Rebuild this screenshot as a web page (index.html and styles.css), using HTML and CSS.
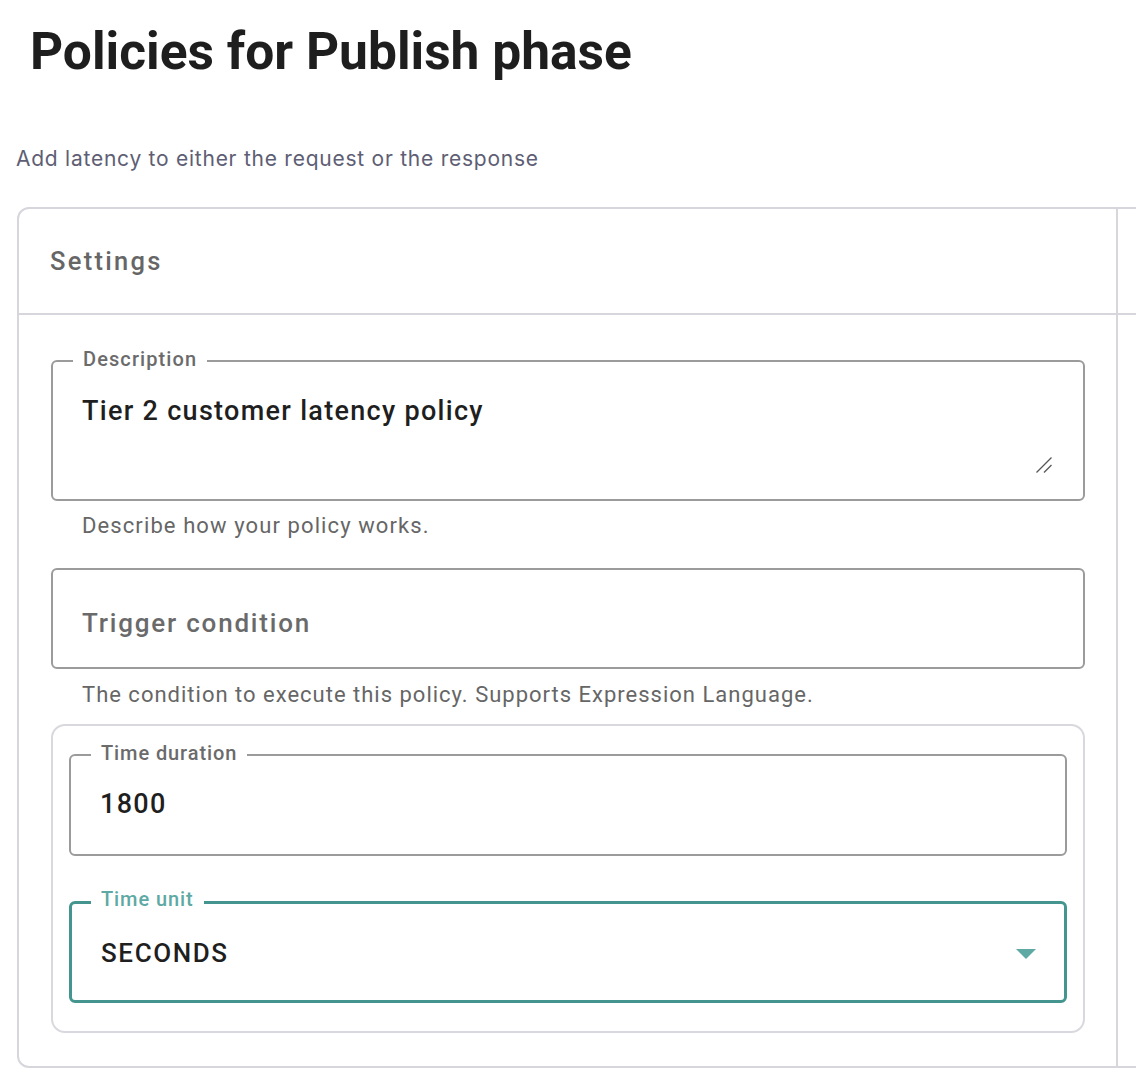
FILE: index.html
```html
<!DOCTYPE html>
<html lang="en">
<head>
<meta charset="utf-8">
<title>Policies for Publish phase</title>
<link rel="stylesheet" href="styles.css">
</head>
<body>
<div class="page">
  <h1 class="title">Policies for Publish phase</h1>
  <p class="subtitle">Add latency to either the request or the response</p>
  <div class="card">
    <div class="main">
      <div class="card-header"><span class="card-title">Settings</span></div>
      <div class="card-body">
        <div class="field field-desc">
          <span class="field-label">Description</span>
          <div class="field-value">Tier 2 customer latency policy</div>
          <svg class="grip" width="16" height="16" viewBox="0 0 16 16" aria-hidden="true">
            <line x1="0.5" y1="15.5" x2="15.5" y2="0.5" stroke="#555" stroke-width="1.2"/>
            <line x1="8" y1="15.5" x2="15.5" y2="8" stroke="#555" stroke-width="1.2"/>
          </svg>
        </div>
        <div class="hint">Describe how your policy works.</div>
        <div class="field field-trigger">
          <div class="field-placeholder">Trigger condition</div>
        </div>
        <div class="hint hint-2">The condition to execute this policy. Supports Expression Language.</div>
        <div class="group">
          <div class="field field-duration">
            <span class="field-label">Time duration</span>
            <div class="field-value">1800</div>
          </div>
          <div class="field field-unit">
            <span class="field-label label-focus">Time unit</span>
            <div class="select-row">
              <div class="field-value value-caps">SECONDS</div>
              <svg class="arrow" width="20" height="10" viewBox="0 0 20 10" aria-hidden="true">
                <polygon points="0,0 20,0 10,10" fill="#5ea9a4"/>
              </svg>
            </div>
          </div>
        </div>
      </div>
    </div>
    <div class="side">
      <div class="card-header"></div>
    </div>
  </div>
</div>
</body>
</html>
```
FILE: styles.css
```css
html, body {
  margin: 0;
  padding: 0;
  overflow: hidden;
  background: #ffffff;
}
body {
  font-family: Roboto, "Noto Sans", sans-serif;
  color: #1f1f1f;
}
.page {
  width: 1136px;
  height: 1086px;
  overflow: hidden;
}
.title {
  margin: 21px 0 0 30px;
  font-size: 51.5px;
  line-height: 62px;
  font-weight: 700;
  color: #1e1e1e;
  white-space: nowrap;
}
.subtitle {
  margin: 62px 0 0 16px;
  font-family: Inter, Roboto, sans-serif;
  font-size: 21px;
  line-height: 28px;
  color: #5e5e74;
  letter-spacing: 0.75px;
  white-space: nowrap;
}
.card {
  margin: 34px 0 0 17px;
  width: 1300px;
  display: flex;
  border: 2px solid #d6d6dc;
  border-radius: 12px;
  box-sizing: border-box;
}
.main {
  width: 1099px;
  flex: none;
  border-right: 2px solid #d6d6dc;
  box-sizing: border-box;
}
.side {
  flex: 1;
}
.card-header {
  height: 106px;
  box-sizing: border-box;
  border-bottom: 2px solid #d6d6dc;
  display: flex;
  align-items: center;
  padding-left: 31px;
}
.card-title {
  font-size: 25.5px;
  line-height: 30px;
  font-weight: 500;
  color: #666666;
  letter-spacing: 2.3px;
}
.card-body {
  padding: 45px 31px 33px 32px;
}
.field {
  position: relative;
  border: 2px solid #9b9b9b;
  border-radius: 6px;
  box-sizing: border-box;
}
.field-label {
  position: absolute;
  top: -15px;
  left: 20px;
  padding: 0 10px;
  background: #ffffff;
  font-size: 20px;
  line-height: 24px;
  font-weight: 500;
  color: #6b6b6b;
  letter-spacing: 1.1px;
  white-space: nowrap;
}
.field-duration .field-label {
  letter-spacing: 0.9px;
}
.field-value {
  font-size: 27px;
  line-height: 32px;
  font-weight: 500;
  color: #1f1f1f;
  letter-spacing: 1.3px;
}
.field-desc {
  height: 141px;
  padding: 33px 29px 0;
  display: flex;
  flex-direction: column;
}
.grip {
  margin-top: auto;
  align-self: flex-end;
  margin-bottom: 26px;
  margin-right: 2px;
}
.hint {
  margin: 13px 0 0 31px;
  font-size: 22px;
  line-height: 24px;
  color: #666666;
  letter-spacing: 1.1px;
  white-space: nowrap;
}
.hint-2 {
  margin-top: 14px;
  letter-spacing: 1px;
}
.field-trigger {
  margin-top: 30px;
  height: 101px;
  padding: 37px 29px 0;
}
.field-placeholder {
  font-size: 26px;
  line-height: 32px;
  font-weight: 500;
  color: #6a6a6a;
  letter-spacing: 1.8px;
}
.group {
  margin-top: 17px;
  border: 2px solid #d8d8de;
  border-radius: 14px;
  padding: 28px 16px 28px 16px;
}
.field-duration {
  height: 102px;
  padding: 32px 29px 0;
}
.field-unit {
  margin-top: 45px;
  height: 102px;
  border: 3px solid #44958f;
  padding: 33px 28px 0 29px;
}
.label-focus {
  top: -17px;
  left: 19px;
  color: #5ea9a4;
  letter-spacing: 0.9px;
}
.select-row {
  display: flex;
  align-items: center;
}
.value-caps {
  flex: 1;
  font-size: 26px;
  letter-spacing: 1.6px;
}
.arrow {
  flex: none;
  margin-top: 2px;
}
```
